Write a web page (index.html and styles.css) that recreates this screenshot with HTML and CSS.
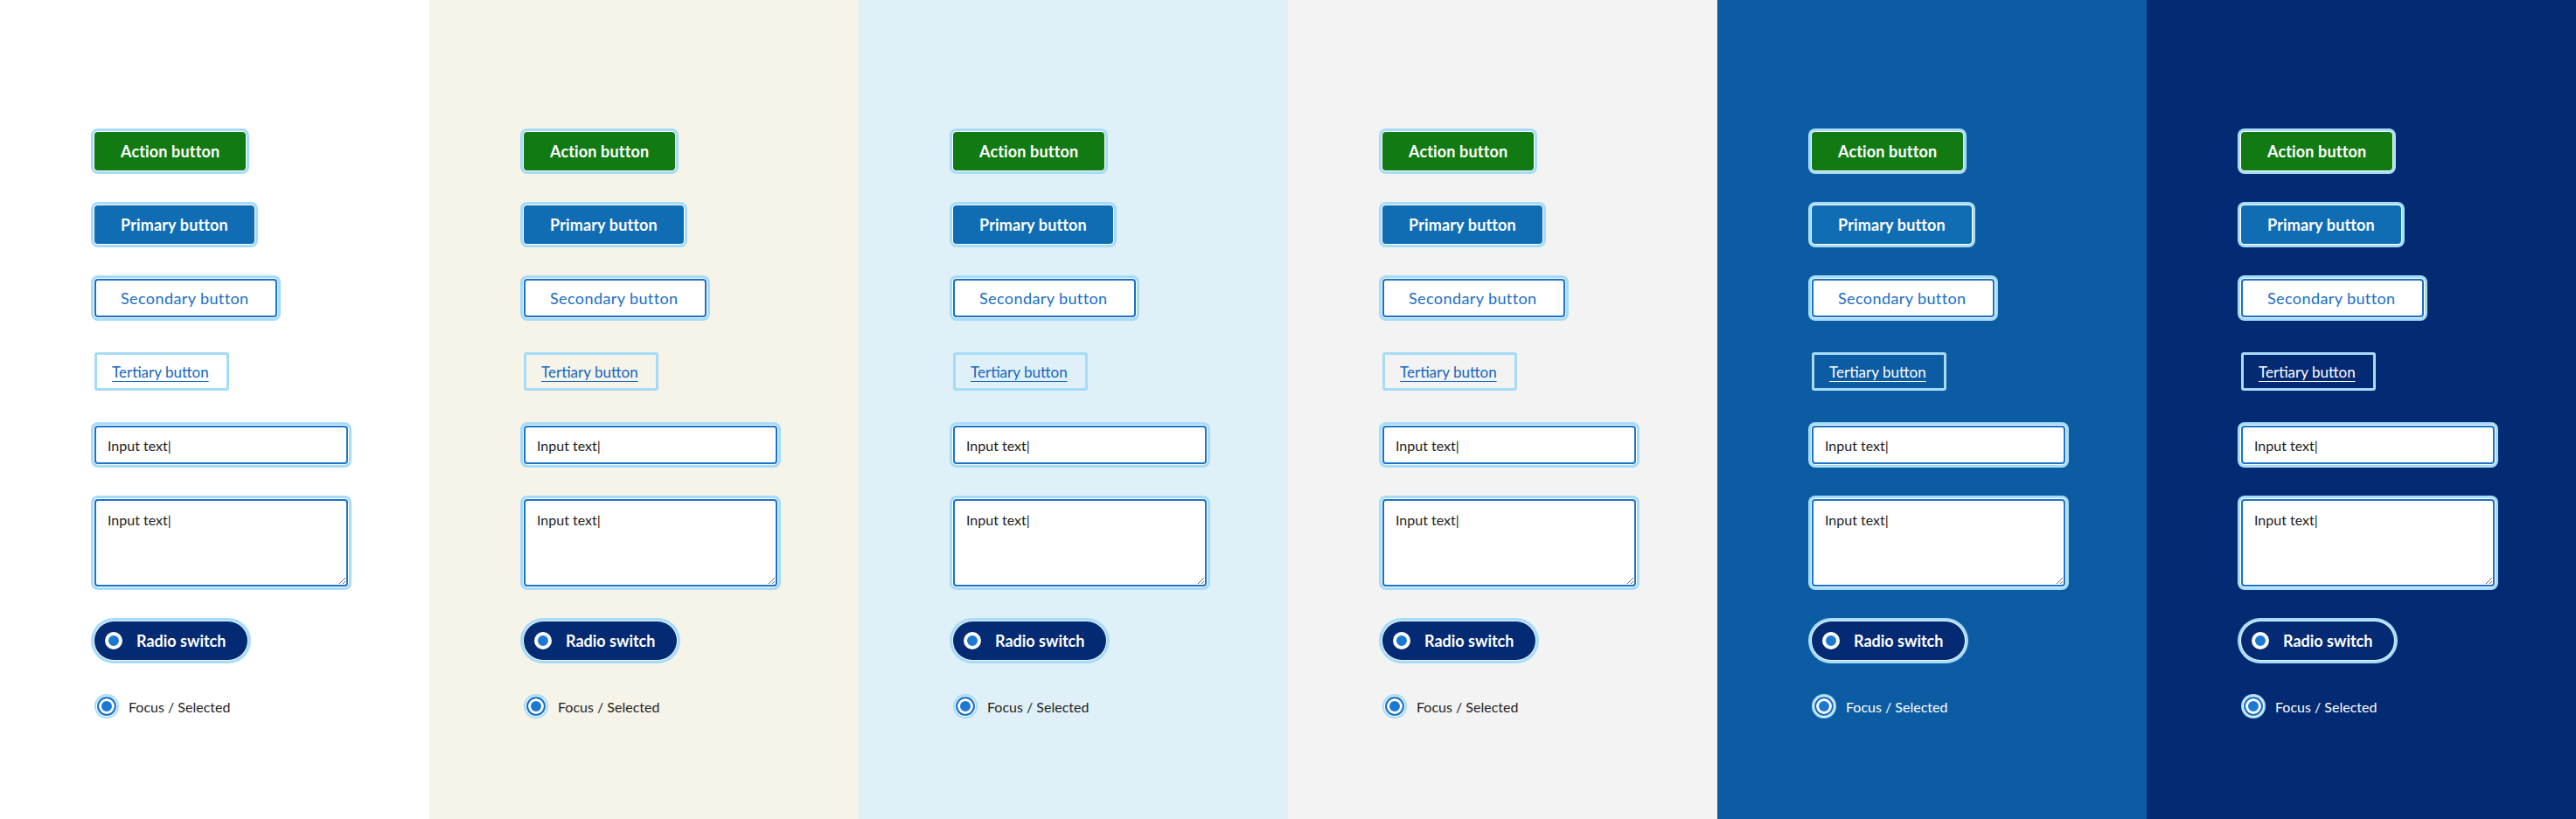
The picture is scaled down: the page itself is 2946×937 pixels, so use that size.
FILE: index.html
```html
<!DOCTYPE html>
<html lang="en">
<head>
<meta charset="utf-8">
<title>Focus states</title>
<link rel="stylesheet" href="styles.css">
</head>
<body>
<main class="board">
  <section class="col col-white">
    <button class="btn btn-action">Action button</button>
    <button class="btn btn-primary">Primary button</button>
    <button class="btn btn-secondary">Secondary button</button>
    <button class="btn btn-tertiary"><span class="tlink">Tertiary button</span></button>
    <input class="field" type="text" value="Input text|" readonly>
    <textarea class="field area" readonly>Input text|</textarea>
    <div class="switch"><span class="switch-dot"></span><span>Radio switch</span></div>
    <div class="choice"><span class="radio"></span><span>Focus / Selected</span></div>
  </section>
  <section class="col col-beige">
    <button class="btn btn-action">Action button</button>
    <button class="btn btn-primary">Primary button</button>
    <button class="btn btn-secondary">Secondary button</button>
    <button class="btn btn-tertiary"><span class="tlink">Tertiary button</span></button>
    <input class="field" type="text" value="Input text|" readonly>
    <textarea class="field area" readonly>Input text|</textarea>
    <div class="switch"><span class="switch-dot"></span><span>Radio switch</span></div>
    <div class="choice"><span class="radio"></span><span>Focus / Selected</span></div>
  </section>
  <section class="col col-sky">
    <button class="btn btn-action">Action button</button>
    <button class="btn btn-primary">Primary button</button>
    <button class="btn btn-secondary">Secondary button</button>
    <button class="btn btn-tertiary"><span class="tlink">Tertiary button</span></button>
    <input class="field" type="text" value="Input text|" readonly>
    <textarea class="field area" readonly>Input text|</textarea>
    <div class="switch"><span class="switch-dot"></span><span>Radio switch</span></div>
    <div class="choice"><span class="radio"></span><span>Focus / Selected</span></div>
  </section>
  <section class="col col-grey">
    <button class="btn btn-action">Action button</button>
    <button class="btn btn-primary">Primary button</button>
    <button class="btn btn-secondary">Secondary button</button>
    <button class="btn btn-tertiary"><span class="tlink">Tertiary button</span></button>
    <input class="field" type="text" value="Input text|" readonly>
    <textarea class="field area" readonly>Input text|</textarea>
    <div class="switch"><span class="switch-dot"></span><span>Radio switch</span></div>
    <div class="choice"><span class="radio"></span><span>Focus / Selected</span></div>
  </section>
  <section class="col col-blue dark">
    <button class="btn btn-action">Action button</button>
    <button class="btn btn-primary">Primary button</button>
    <button class="btn btn-secondary">Secondary button</button>
    <button class="btn btn-tertiary"><span class="tlink">Tertiary button</span></button>
    <input class="field" type="text" value="Input text|" readonly>
    <textarea class="field area" readonly>Input text|</textarea>
    <div class="switch"><span class="switch-dot"></span><span>Radio switch</span></div>
    <div class="choice"><span class="radio"></span><span>Focus / Selected</span></div>
  </section>
  <section class="col col-navy dark">
    <button class="btn btn-action">Action button</button>
    <button class="btn btn-primary">Primary button</button>
    <button class="btn btn-secondary">Secondary button</button>
    <button class="btn btn-tertiary"><span class="tlink">Tertiary button</span></button>
    <input class="field" type="text" value="Input text|" readonly>
    <textarea class="field area" readonly>Input text|</textarea>
    <div class="switch"><span class="switch-dot"></span><span>Radio switch</span></div>
    <div class="choice"><span class="radio"></span><span>Focus / Selected</span></div>
  </section>
</main>
</body>
</html>
```
FILE: styles.css
```css
html, body {
  margin: 0;
  padding: 0;
}
body {
  font-family: Lato, "Open Sans", "Liberation Sans", sans-serif;
  color: #1f1f1f;
}
.board {
  display: grid;
  grid-template-columns: repeat(6, 491px);
  height: 937px;
}
.col {
  display: flex;
  flex-direction: column;
  align-items: flex-start;
  gap: 40px;
  padding: 151px 0 0 108px;
}
.col-white { background: #ffffff; }
.col-beige { background: #f6f3e9; }
.col-sky { background: #dff0f9; }
.col-grey { background: #f3f3f3; }
.col-blue { background: #0c5ca3; }
.col-navy { background: #032a72; }

.btn {
  box-sizing: border-box;
  height: 44px;
  margin: 0;
  padding: 0 30px;
  border: 0;
  border-radius: 4px;
  font-family: inherit;
  font-size: 18px;
  font-weight: 700;
  letter-spacing: 0.15px;
  line-height: 1;
  color: #fff;
  box-shadow: 0 0 0 1px #ffffff, 0 0 0 4px #a6dcf8;
}
.btn-action { background: #127a12; }
.btn-primary { background: #106db4; }
.btn-secondary {
  background: #fff;
  border: 2px solid #1b70c6;
  padding: 0 30px 0 28px;
  color: #1b6ec6;
  font-weight: 400;
  letter-spacing: 0.4px;
}
.btn-tertiary {
  background: transparent;
  border: 3px solid #a6dcf8;
  border-radius: 3px;
  box-shadow: none;
  padding: 0 20px 0 17px;
  font-size: 17px;
  font-weight: 400;
  letter-spacing: 0;
  color: #1566c0;
}
.tlink {
  text-decoration: underline;
  text-underline-offset: 4px;
  text-decoration-thickness: 1px;
}
.dark .btn-tertiary { color: #ffffff; }

.field {
  box-sizing: border-box;
  width: 290px;
  height: 44px;
  margin: 0;
  padding: 0 12px 0 13px;
  border: 2px solid #1b72c8;
  border-radius: 4px;
  background: #fff;
  font-family: inherit;
  font-size: 16px;
  color: #222;
  outline: none;
  box-shadow: 0 0 0 1px #ffffff, 0 0 0 4px #a6dcf8;
}
.area {
  height: 100px;
  padding-top: 12px;
  resize: both;
  display: block;
}

.switch {
  box-sizing: border-box;
  height: 44px;
  display: flex;
  align-items: center;
  gap: 16px;
  padding: 0 25px 0 12px;
  border-radius: 22px;
  background: #032a72;
  color: #fff;
  font-size: 18px;
  font-weight: 700;
  box-shadow: 0 0 0 1px #e9f5fc, 0 0 0 4px #a6dcf8;
}
.switch-dot {
  box-sizing: border-box;
  width: 20px;
  height: 20px;
  border-radius: 50%;
  border: 4.5px solid #ffffff;
  background: #1c79d3;
}

.choice {
  height: 26px;
  display: flex;
  align-items: center;
  gap: 14px;
  font-size: 16px;
  color: #1f1f1f;
}
.dark .choice { color: #ffffff; }
.radio {
  box-sizing: border-box;
  width: 22px;
  height: 22px;
  margin-left: 3px;
  border-radius: 50%;
  border: 2px solid #1c72c8;
  background: #1c79d3;
  box-shadow: inset 0 0 0 3px #ffffff, 0 0 0 1px #ffffff, 0 0 0 3px #a6dcf8;
}
```
